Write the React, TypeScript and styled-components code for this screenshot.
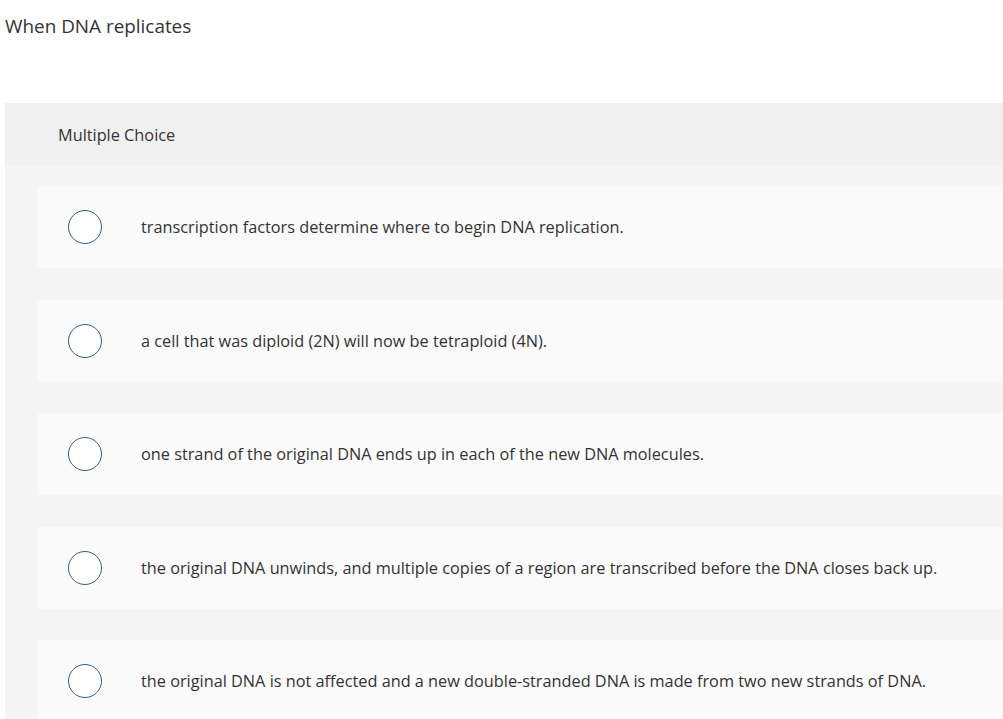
import styled, { createGlobalStyle } from "styled-components";

const GlobalStyle = createGlobalStyle`
  html, body {
    margin: 0;
    padding: 0;
    background: #ffffff;
    overflow: hidden;
  }
  body {
    font-family: "Open Sans", "Lato", sans-serif;
    color: #333333;
  }
`;

const options = [
  "transcription factors determine where to begin DNA replication.",
  "a cell that was diploid (2N) will now be tetraploid (4N).",
  "one strand of the original DNA ends up in each of the new DNA molecules.",
  "the original DNA unwinds, and multiple copies of a region are transcribed before the DNA closes back up.",
  "the original DNA is not affected and a new double-stranded DNA is made from two new strands of DNA.",
];

const App = () => {
  return (
    <Page>
      <GlobalStyle />
      <Question>When DNA replicates</Question>
      <Panel>
        <PanelHeader>Multiple Choice</PanelHeader>
        <PanelBody>
          {options.map((text) => (
            <Option key={text}>
              <Radio />
              <OptionText>{text}</OptionText>
            </Option>
          ))}
        </PanelBody>
      </Panel>
    </Page>
  );
};

/** Styles */
const Page = styled.div`
  width: 1040px;
  padding: 14px 0 0 5px;
`;

const Question = styled.div`
  font-size: 18.9px;
  line-height: 24px;
  color: #333333;
  margin-bottom: 65px;
`;

const Panel = styled.div`
  background: #f5f5f5;
`;

const PanelHeader = styled.div`
  background: #f0f0f0;
  height: 63px;
  display: flex;
  align-items: center;
  padding-left: 53px;
  font-size: 16.3px;
  color: #333333;
`;

const PanelBody = styled.div`
  display: flex;
  flex-direction: column;
  gap: 31.5px;
  padding: 20px 0 20px 32px;
`;

const Option = styled.label`
  display: flex;
  align-items: center;
  height: 82px;
  background: #fafafa;
  border-radius: 4px 0 0 4px;
  padding-left: 31px;
`;

const Radio = styled.span`
  width: 32px;
  height: 32px;
  border: 1.5px solid #2d5f8e;
  border-radius: 50%;
  background: #ffffff;
  flex-shrink: 0;
`;

const OptionText = styled.span`
  margin-left: 39px;
  font-size: 16.3px;
  color: #333333;
`;

/** Exports */
export default App;
